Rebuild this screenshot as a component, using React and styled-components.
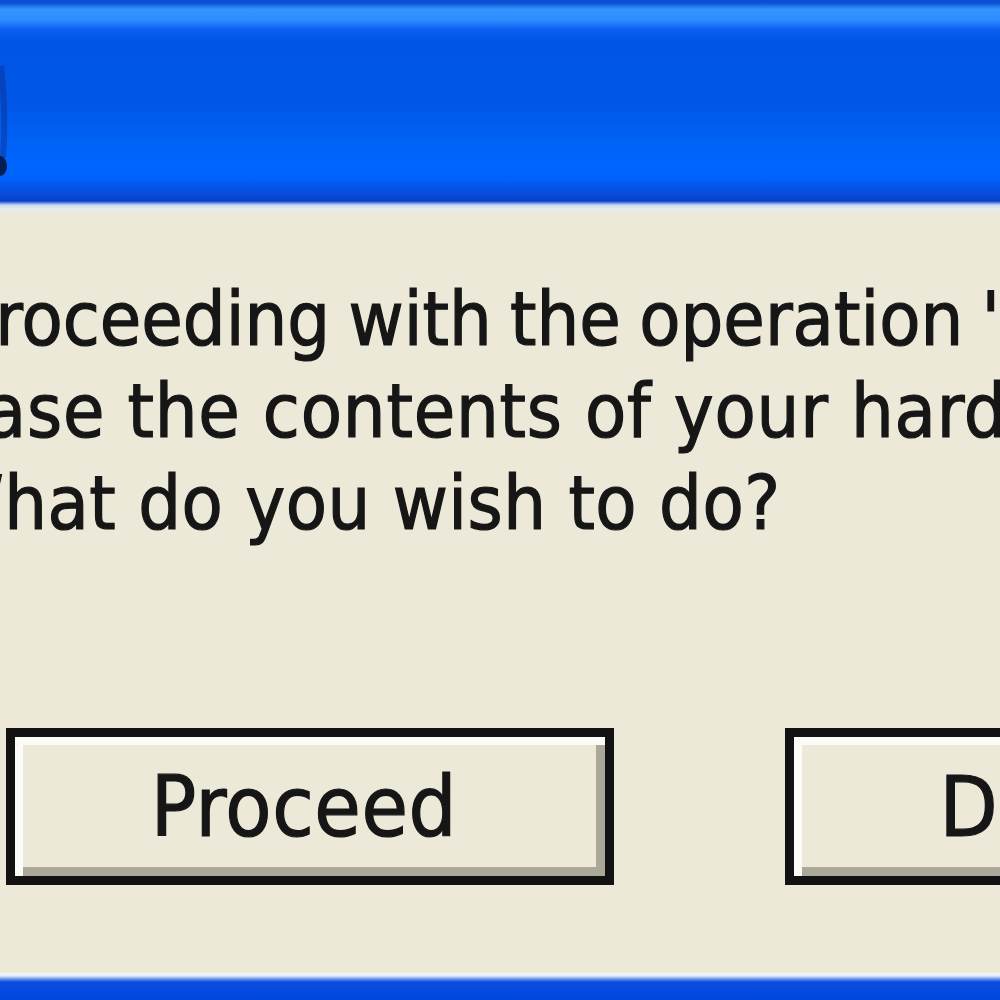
import React from 'react';
import styled, { createGlobalStyle } from 'styled-components';

const GlobalStyle = createGlobalStyle`
  html, body {
    margin: 0;
    padding: 0;
    overflow: hidden;
    background: #ece9d8;
  }
`

const Window = styled.div`
  width: 1000px;
  height: 1000px;
  display: flex;
  flex-direction: column;
  overflow: hidden;
  background: #ece9d8;
  font-family: "DejaVu Sans Condensed", "DejaVu Sans", sans-serif;
  color: #161616;
`

const TitleBar = styled.div`
  height: 212px;
  flex-shrink: 0;
  display: flex;
  align-items: flex-start;
  background: linear-gradient(
    to bottom,
    #0a4fd0 0px,
    #0b52d6 3px,
    #3592ff 9px,
    #2f8cff 20px,
    #0c5ef0 30px,
    #0055e5 40px,
    #0056e6 100px,
    #0061f5 140px,
    #0066ff 165px,
    #0062f8 180px,
    #0a48d8 195px,
    #0840cc 201px,
    #c8d8f0 205px,
    #e8eef4 209px,
    #ece9d8 212px
  );
`

const Body = styled.div`
  flex: 1;
  display: flex;
  flex-direction: column;
  padding-top: 61px;
`

const Message = styled.div`
  font-size: 75px;
  line-height: 92px;
  white-space: nowrap;
  -webkit-text-stroke: 1.2px #161616;
`

const Line = styled.div`
  margin-left: ${props => props.$offset}px;
  letter-spacing: ${props => props.$spacing || 0}px;
  word-spacing: ${props => props.$words || 0}px;
`

const ButtonRow = styled.div`
  display: flex;
  gap: 171px;
  margin-top: 179px;
  padding-left: 6px;
`

const Button = styled.button`
  flex-shrink: 0;
  width: 608px;
  height: 157px;
  box-sizing: border-box;
  border: 9px solid #121212;
  background: #ece9d8;
  box-shadow: inset 8px 8px 0 0 #fbfbf8, inset -9px -9px 0 0 #aca899;
  font-family: inherit;
  font-size: 84px;
  letter-spacing: 0.6px;
  color: #161616;
  -webkit-text-stroke: 1.2px #161616;
  padding: 0 12px 0 0;
  display: flex;
  align-items: center;
  justify-content: center;
  cursor: pointer;
`

const BottomFrame = styled.div`
  height: 28px;
  flex-shrink: 0;
  background: linear-gradient(
    to bottom,
    #ece9d8 0px,
    #f2f5fa 2px,
    #dfe8fa 4px,
    #6a90e8 7px,
    #0a4ce0 10px,
    #0047dd 100%
  );
`

const TitleIcon = () => (
  <svg width="12" height="212" viewBox="0 0 12 212">
    <path d="M1 66 C 5 100, 5 130, 3 158" stroke="#0b2f95" strokeWidth="6" fill="none" opacity="0.5" />
    <ellipse cx="0" cy="166" rx="7" ry="10" fill="#061640" opacity="0.9" />
  </svg>
)

const App = () => {
  return (
    <Window>
      <GlobalStyle />
      <TitleBar>
        <TitleIcon />
      </TitleBar>
      <Body>
        <Message>
          <Line $offset={-44} $words={-3}>Proceeding with the operation 'Format' will</Line>
          <Line $offset={-86} $spacing={0.8}>erase the contents of your hard drive.</Line>
          <Line $offset={-63} $spacing={0.5}>What do you wish to do?</Line>
        </Message>
        <ButtonRow>
          <Button>Proceed</Button>
          <Button>Decline</Button>
        </ButtonRow>
      </Body>
      <BottomFrame />
    </Window>
  );
}

export default App;
